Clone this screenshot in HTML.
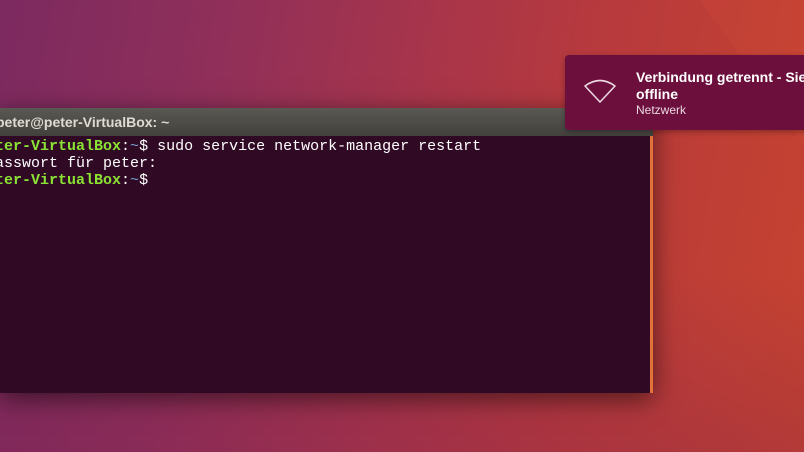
<!DOCTYPE html>
<html><head><style>
body{margin:0;width:804px;height:452px;overflow:hidden;position:relative;
background:linear-gradient(100deg,#7c2a60 0%,#8f2f5a 25%,#a8354a 50%,#b83a3c 70%,#c6432f 100%);}
.bg2{position:absolute;inset:0;background:linear-gradient(180deg,rgba(0,0,0,0) 60%,rgba(120,30,80,.25) 100%);}
.shard{position:absolute;left:700px;top:0;width:200px;height:452px;background:rgba(230,90,60,.12);clip-path:polygon(0 0,100% 0,100% 100%,55% 100%,65% 40%);}
.term{position:absolute;left:0;top:108px;width:653px;height:285px;box-shadow:0 6px 24px rgba(0,0,0,.55);}
.title{height:28px;background:linear-gradient(#5a5852,#43413c);color:#dfdbd2;font:bold 14px "Liberation Sans",sans-serif;line-height:29px;padding-left:0;white-space:nowrap;text-indent:-4px;}
.body{position:absolute;top:28px;left:0;width:650px;height:257px;background:#300a24;border-right:3px solid #e2713a;overflow:hidden;}
.txt{position:absolute;left:-5px;top:2px;font:15px "Liberation Mono",monospace;line-height:17px;color:#fff;white-space:pre;}
.g{color:#8ae234;font-weight:bold}.b{color:#729fcf}
.note{position:absolute;left:565px;top:55px;width:250px;height:75px;background:#6d0f3d;border-radius:4px;box-shadow:0 2px 6px rgba(0,0,0,.3);}
.note .t{position:absolute;left:71px;top:14px;color:#fff;font:bold 14px "Liberation Sans",sans-serif;line-height:17px;white-space:nowrap}
.note .s{position:absolute;left:71px;top:48px;color:#e8d8e0;font:12px "Liberation Sans",sans-serif}
</style></head><body>
<div class="bg2"></div><div class="shard"></div>
<div class="term"><div class="title">peter@peter-VirtualBox: ~</div>
<div class="body"><div class="txt"><span class="g">ter-VirtualBox</span>:<span class="b">~</span>$ sudo service network-manager restart
asswort für peter:
<span class="g">ter-VirtualBox</span>:<span class="b">~</span>$</div></div></div>
<div class="note">
<svg style="position:absolute;left:17px;top:22px" width="36" height="28" viewBox="0 0 36 28"><path d="M3 9 Q18 -2 33 9 L18 25 Z" fill="none" stroke="#e9d6df" stroke-width="1.6" stroke-linejoin="round"/></svg>
<div class="t">Verbindung getrennt - Sie sind<br>offline</div>
<div class="s">Netzwerk</div></div>
</body></html>
